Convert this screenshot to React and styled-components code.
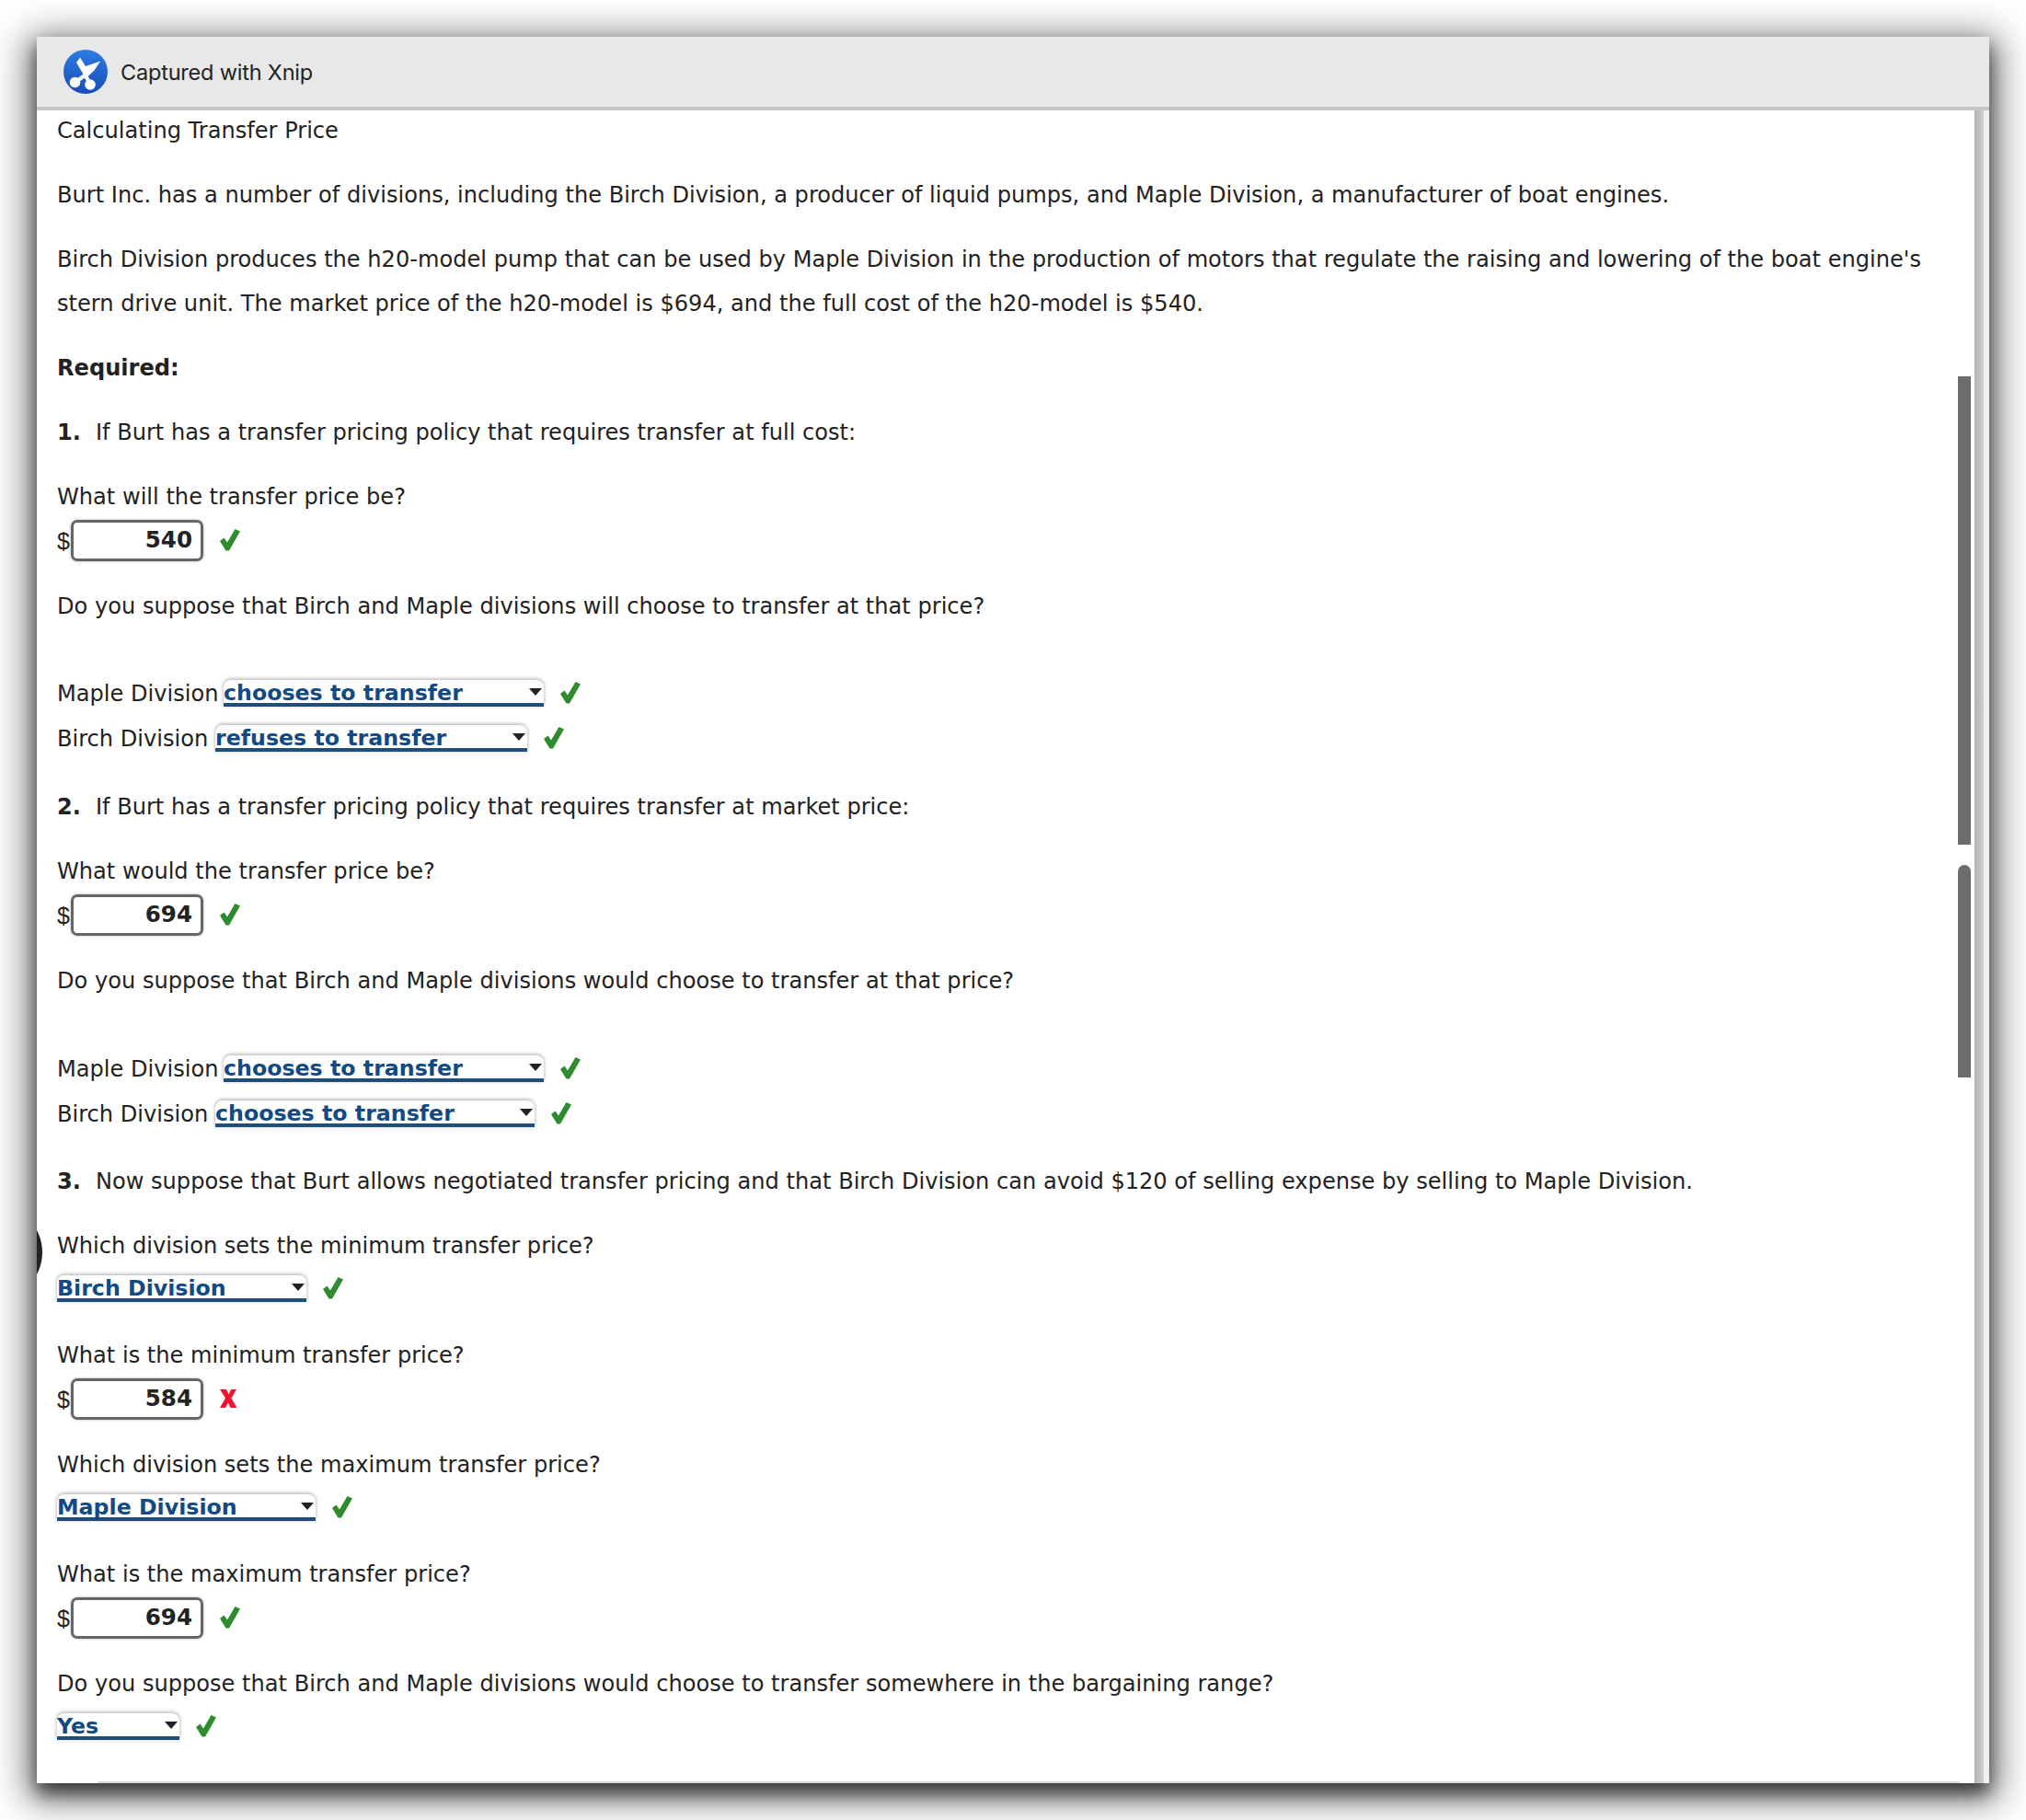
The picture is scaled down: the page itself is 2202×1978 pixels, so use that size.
import React from "react";
import styled, {createGlobalStyle} from "styled-components";

const Global = createGlobalStyle`
  html, body {
    margin: 0;
    background: #fff;
  }
`;

const Page = styled.div`
  padding: 40px;
  height: 1978px;
  box-sizing: border-box;
`;
const Frame = styled.div`
  position: relative;
  height: 1898px;
  display: flex;
  flex-direction: column;
  overflow: hidden;
  background: #fff;
`;
// the shadow sits on its own wrapper so that the frame can clip what is inside it
const Shadow = styled.div`
  box-shadow: 0 9px 38px 10px rgba(0, 0, 0, 0.5), 0 11px 18px rgba(0, 0, 0, 0.6);
`;
const Header = styled.header`
  flex: none;
  height: 76px;
  display: flex;
  align-items: center;
  gap: 13px;
  padding-left: 29px;
  background: #e8e8e8;
  border-bottom: 4px solid #c6c6c6;
  font-family: Inter, "Liberation Sans", sans-serif;
  font-size: 23.5px;
  letter-spacing: -0.2px;
  color: #222;
`;
const Body = styled.div`
  flex: 1;
  min-height: 0;
  display: flex;
`;
const Content = styled.main`
  flex: 1;
  padding: 0 22px;
  margin-top: -3px;
  font-family: "DejaVu Sans", Verdana, sans-serif;
  font-size: 24.1px;
  line-height: 48px;
  color: #222;
`;
const Track = styled.div`
  flex: none;
  width: 16px;
  background: linear-gradient(to right, #b4b4b4 0, #cfcfcf 10px, #eeeeee 10px);
`;
const Thumb = styled.div`
  position: absolute;
  right: 20px;
  width: 14px;
  top: ${p => p.$top}px;
  height: ${p => p.$height}px;
  background: #6c6c6c;
  border-radius: ${p => (p.$round ? "7px 7px 0 0" : "0")};
`;
const EdgeLine = styled.div`
  position: absolute;
  left: 66px;
  right: 32px;
  bottom: 0;
  height: 2px;
  background: #d5dadd;
`;
const Blob = styled.div`
  position: absolute;
  left: -96px;
  top: 1270px;
  width: 102px;
  height: 102px;
  border-radius: 50%;
  background: #222;
`;
const P = styled.p`
  margin: 0 0 ${p => (p.$after ?? 22) - 1}px;
  padding-top: 1px;
`;
const Num = styled.b`
  margin-right: 16px;
`;
const Row = styled.div`
  display: flex;
  align-items: center;
  height: ${p => p.$height ?? 49}px;
  margin-bottom: ${p => p.$after ?? 22}px;
`;
const Dollar = styled.span`
  width: 15px;
  font-family: "Liberation Sans", sans-serif;
  font-size: 25px;
`;
const Field = styled.div`
  width: 144px;
  height: 45px;
  box-sizing: border-box;
  border: 3px solid #666;
  border-radius: 7px;
  padding-right: 9px;
  text-align: right;
  font-size: 24.6px;
  font-weight: 700;
  line-height: 38px;
  box-shadow: 0 0 3px rgba(0, 0, 0, 0.3);
`;
const Label = styled.span`
  width: ${p => p.$width}px;
`;
const Dropdown = styled.div`
  width: ${p => p.$width}px;
  height: 29px;
  box-sizing: border-box;
  display: flex;
  align-items: center;
  justify-content: space-between;
  padding: 3px 2px 0 0;
  border-bottom: 4px solid #1f4e79;
  border-radius: 8px 8px 0 0;
  box-shadow: 0 -1px 4px rgba(0, 0, 0, 0.35);
  font-size: 23.7px;
  font-weight: 700;
  line-height: 25px;
  color: #114a84;
`;
const Caret = styled.span`
  margin-top: -2px;
  width: 0;
  height: 0;
  border-left: 7px solid transparent;
  border-right: 7px solid transparent;
  border-top: 8px solid #222;
`;
const Mark = styled.svg`
  flex: none;
  margin: -2px 0 0 16px;
  width: 24px;
  height: 26px;
`;
const Logo = styled.svg`
  flex: none;
  margin-left: -1px;
  width: 50px;
  height: 50px;
`;

const Check = () => (
  <Mark viewBox="0 0 24 26">
    <path d="M2 14 L6.5 10.5 L10 15.5 L18.5 1 L24 3.5 L12 24.5 L8.5 24.5 Z" fill="#2e8b2e" />
  </Mark>
);
const Cross = () => (
  <Mark viewBox="0 0 24 26">
    <path d="M2 3 L9 3 L11.5 8.5 L14 3 L20 3 L14.5 12.5 L20.5 23 L13.5 23 L11 17.5 L8 23 L2 23 L8 12.5 Z" fill="#f0142f" />
  </Mark>
);
const Price = ({value, wrong}) => (
  <Row>
    <Dollar>$</Dollar>
    <Field>{value}</Field>
    {wrong ? <Cross /> : <Check />}
  </Row>
);
const Select = ({label, labelWidth, value, width, after, height}) => (
  <Row $after={after} $height={height}>
    {label && <Label $width={labelWidth}>{label}</Label>}
    <Dropdown $width={width}>
      {value}
      <Caret />
    </Dropdown>
    <Check />
  </Row>
);

const App = () => (
  <Page>
    <Global />
    <Shadow>
      <Frame>
        <Header>
          <Logo viewBox="0 0 50 50">
            <defs>
              <linearGradient id="xnip" x1="0" y1="0" x2="0" y2="1">
                <stop offset="0" stopColor="#2b7de4" />
                <stop offset="1" stopColor="#1a4db5" />
              </linearGradient>
            </defs>
            <circle cx="25" cy="25" r="24" fill="url(#xnip)" />
            <path d="M19 9.5 L15 15 L24.5 31 L29 27 L25 19 Z" fill="#fff" />
            <path d="M41 13.5 L25 19 L22 28 L26.5 31 L34.5 23.5 Z" fill="#fff" />
            <path d="M13.5 36.5 L27 27 M30 39 L24 27" stroke="#fff" strokeWidth="4" fill="none" />
            <circle cx="13.5" cy="36.5" r="5.8" fill="#fff" />
            <circle cx="30" cy="39" r="5.8" fill="#fff" />
          </Logo>
          Captured with Xnip
        </Header>
        <Body>
          <Content>
            <P>Calculating Transfer Price</P>
            <P>Burt Inc. has a number of divisions, including the Birch Division, a producer of liquid pumps, and Maple Division, a manufacturer of boat engines.</P>
            <P>Birch Division produces the h20-model pump that can be used by Maple Division in the production of motors that regulate the raising and lowering of the boat engine's stern drive unit. The market price of the h20-model is $694, and the full cost of the h20-model is $540.</P>
            <P><b>Required:</b></P>
            <P><Num>1.</Num>If Burt has a transfer pricing policy that requires transfer at full cost:</P>
            <P $after={0}>What will the transfer price be?</P>
            <Price value="540" />
            <P $after={47}>Do you suppose that Birch and Maple divisions will choose to transfer at that price?</P>
            <Select label="Maple Division" labelWidth={181} value="chooses to transfer" width={348} after={0} />
            <Select label="Birch Division" labelWidth={172} value="refuses to transfer" width={339} after={25} />
            <P><Num>2.</Num>If Burt has a transfer pricing policy that requires transfer at market price:</P>
            <P $after={0}>What would the transfer price be?</P>
            <Price value="694" />
            <P $after={48}>Do you suppose that Birch and Maple divisions would choose to transfer at that price?</P>
            <Select label="Maple Division" labelWidth={181} value="chooses to transfer" width={348} after={0} />
            <Select label="Birch Division" labelWidth={172} value="chooses to transfer" width={347} after={24} />
            <P><Num>3.</Num>Now suppose that Burt allows negotiated transfer pricing and that Birch Division can avoid $120 of selling expense by selling to Maple Division.</P>
            <P $after={0}>Which division sets the minimum transfer price?</P>
            <Select value="Birch Division" width={271} height={47} after={24} />
            <P $after={0}>What is the minimum transfer price?</P>
            <Price value="584" wrong />
            <P $after={0}>Which division sets the maximum transfer price?</P>
            <Select value="Maple Division" width={281} height={47} after={24} />
            <P $after={0}>What is the maximum transfer price?</P>
            <Price value="694" />
            <P $after={0}>Do you suppose that Birch and Maple divisions would choose to transfer somewhere in the bargaining range?</P>
            <Select value="Yes" width={133} height={47} after={24} />
          </Content>
          <Track />
        </Body>
        <Thumb $top={369} $height={509} />
        <Thumb $top={900} $height={231} $round />
        <Blob />
        <EdgeLine />
      </Frame>
    </Shadow>
  </Page>
);

export default App;
